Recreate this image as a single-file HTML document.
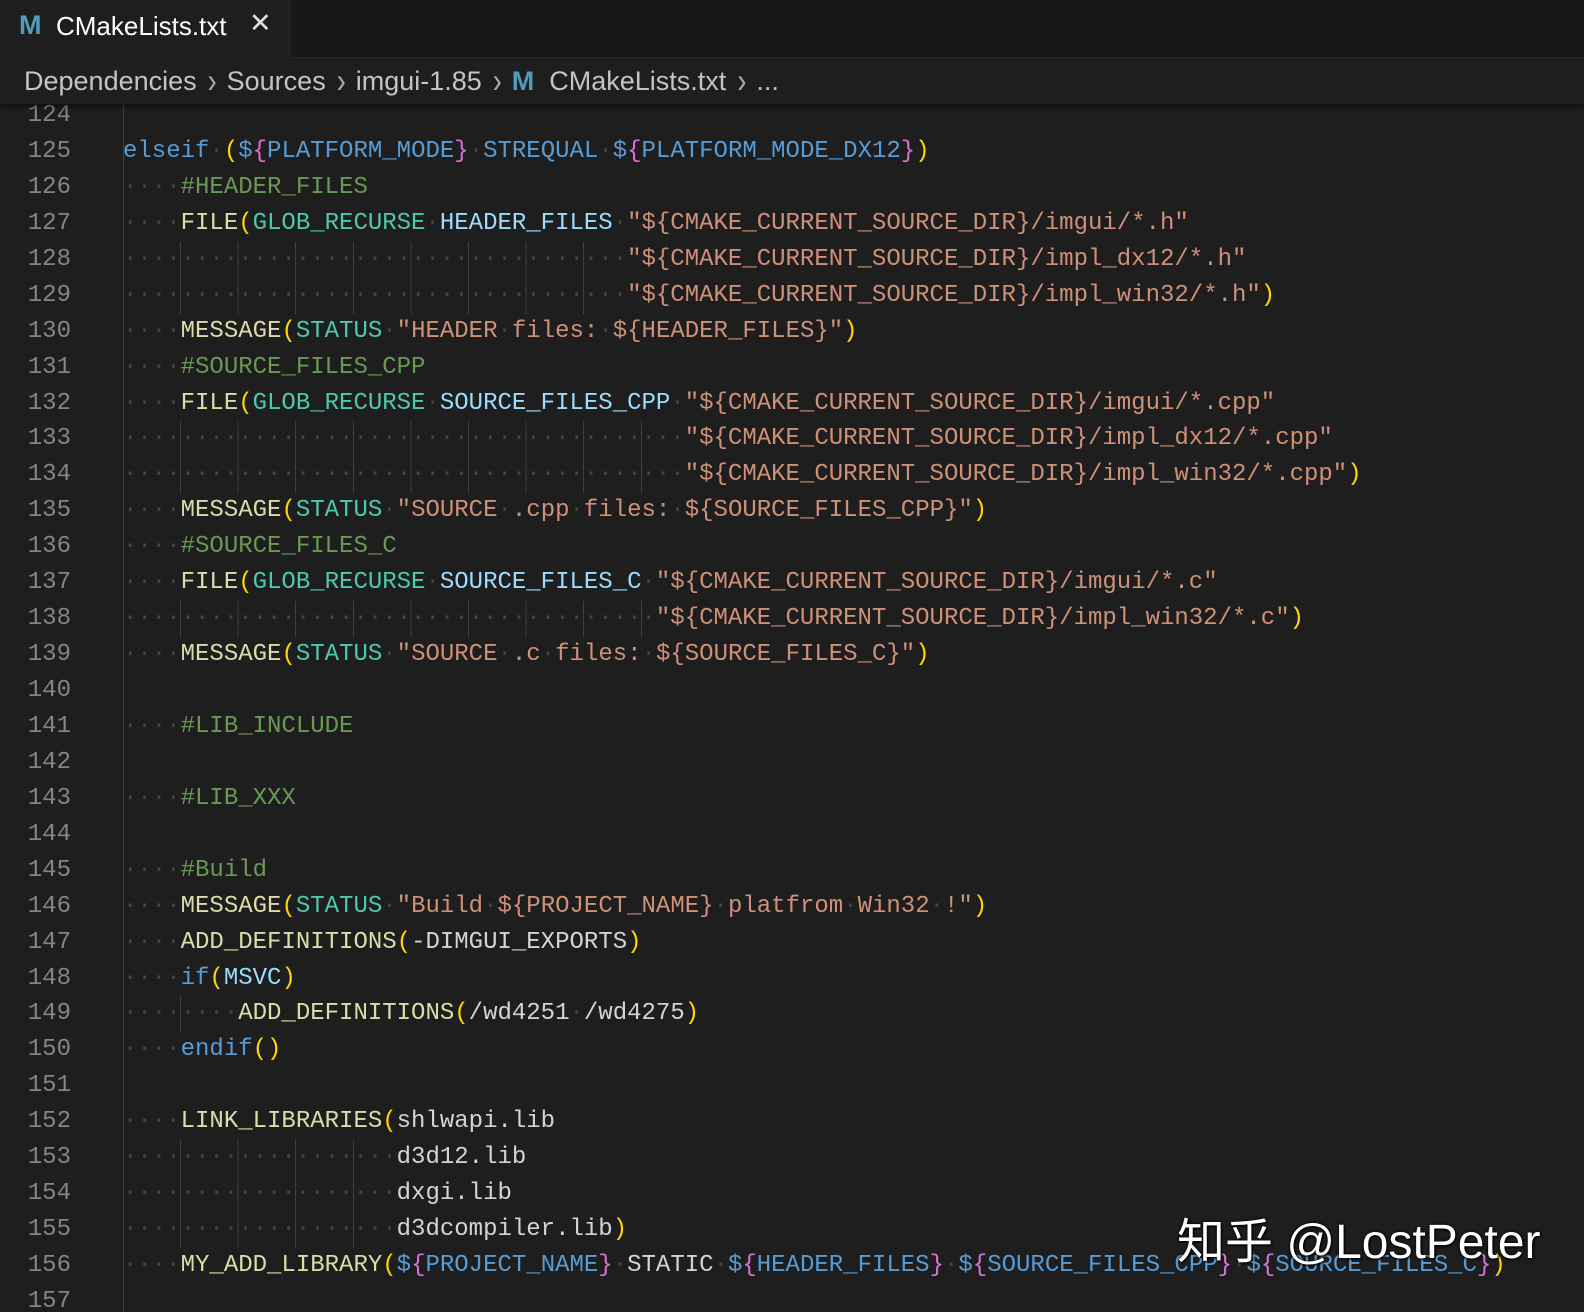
<!DOCTYPE html>
<html><head><meta charset="utf-8"><style>
html,body{margin:0;width:1584px;height:1312px;overflow:hidden}
body{background:#1e1e1e;position:relative;font-family:"Liberation Sans",sans-serif}
#tabs{position:absolute;left:0;top:0;width:1584px;height:58px;background:#181818;border-bottom:1px solid #2b2b2b;box-sizing:border-box}
#tab{position:absolute;left:0;top:0;width:290px;height:58px;background:#1e1e1e;border-right:1px solid #2b2b2b;box-sizing:border-box}
.m{color:#519aba;font-weight:bold;font-family:"Liberation Sans",sans-serif}
#crumb{position:absolute;left:0;top:58px;width:1584px;height:46px;background:#1e1e1e;z-index:2;box-shadow:0 3px 5px rgba(0,0,0,.5);color:#c4c4c4;font-size:27px;line-height:46px;white-space:pre;padding-left:24px;box-sizing:border-box}
.ch{color:#aaa;display:inline-block;margin:0 10px 0 11px;transform:scaleY(1.3)}
#code{position:absolute;left:0;top:98px;width:1584px;height:1220px;overflow:hidden;font-family:"Liberation Mono",monospace;font-size:24px;color:#d4d4d4}
.l{position:relative;height:35.95px;line-height:35.95px;padding-left:123px;white-space:pre}
.n{position:absolute;left:0;width:71px;text-align:right;color:#858585}
.gd{position:absolute;left:180px;top:0;height:100%;background:repeating-linear-gradient(to right,#404040 0 1px,transparent 1px 57.6px)}
#g0{position:absolute;left:123px;top:104px;width:1px;height:1230px;background:#404040}
i{font-style:normal;color:#444}
.k{color:#569cd6}.f{color:#dcdcaa}.p{color:#ffd700}.t{color:#4ec9b0}.v{color:#9cdcfe}.s{color:#ce9178}.c{color:#6a9955}.b{color:#da70d6}.d{color:#569cd6}
#wm{position:absolute;left:1177px;top:1202px;color:#fff;font-size:48px;font-family:"Liberation Sans","Noto Sans CJK SC",sans-serif;text-shadow:0 0 3px #000,1px 1px 2px #000;z-index:3;white-space:nowrap}
</style></head><body>
<div id="tabs"><div id="tab">
<span class="m" style="position:absolute;left:19px;top:10px;font-size:27px">M</span>
<span style="position:absolute;left:56px;top:11px;font-size:26px;color:#fff">CMakeLists.txt</span>
<span style="position:absolute;left:249px;top:8px;font-size:27px;color:#e0e0e0">✕</span>
</div></div>
<div id="crumb">Dependencies<span class="ch">›</span>Sources<span class="ch">›</span>imgui-1.85<span class="ch">›</span><span class="m">M</span>  CMakeLists.txt<span class="ch">›</span>...</div>
<div id="g0"></div>
<div id="code"><div class="l"><span class="n">124</span></div><div class="l"><span class="n">125</span><span class="k">elseif</span><i>·</i><span class="p">(</span><span class="d">$</span><span class="b">{</span><span class="d">PLATFORM_MODE</span><span class="b">}</span><i>·</i><span class="d">STREQUAL</span><i>·</i><span class="d">$</span><span class="b">{</span><span class="d">PLATFORM_MODE_DX12</span><span class="b">}</span><span class="p">)</span></div><div class="l"><span class="n">126</span><i>····</i><span class="c">#HEADER_FILES</span></div><div class="l"><span class="n">127</span><i>····</i><span class="f">FILE</span><span class="p">(</span><span class="t">GLOB_RECURSE</span><i>·</i><span class="v">HEADER_FILES</span><i>·</i><span class="s">"${CMAKE_CURRENT_SOURCE_DIR}/imgui/*.h"</span></div><div class="l"><span class="n">128</span><div class="gd" style="width:405px"></div><i>···································</i><span class="s">"${CMAKE_CURRENT_SOURCE_DIR}/impl_dx12/*.h"</span></div><div class="l"><span class="n">129</span><div class="gd" style="width:405px"></div><i>···································</i><span class="s">"${CMAKE_CURRENT_SOURCE_DIR}/impl_win32/*.h"</span><span class="p">)</span></div><div class="l"><span class="n">130</span><i>····</i><span class="f">MESSAGE</span><span class="p">(</span><span class="t">STATUS</span><i>·</i><span class="s">"HEADER<i>·</i>files:<i>·</i>${HEADER_FILES}"</span><span class="p">)</span></div><div class="l"><span class="n">131</span><i>····</i><span class="c">#SOURCE_FILES_CPP</span></div><div class="l"><span class="n">132</span><i>····</i><span class="f">FILE</span><span class="p">(</span><span class="t">GLOB_RECURSE</span><i>·</i><span class="v">SOURCE_FILES_CPP</span><i>·</i><span class="s">"${CMAKE_CURRENT_SOURCE_DIR}/imgui/*.cpp"</span></div><div class="l"><span class="n">133</span><div class="gd" style="width:462px"></div><i>·······································</i><span class="s">"${CMAKE_CURRENT_SOURCE_DIR}/impl_dx12/*.cpp"</span></div><div class="l"><span class="n">134</span><div class="gd" style="width:462px"></div><i>·······································</i><span class="s">"${CMAKE_CURRENT_SOURCE_DIR}/impl_win32/*.cpp"</span><span class="p">)</span></div><div class="l"><span class="n">135</span><i>····</i><span class="f">MESSAGE</span><span class="p">(</span><span class="t">STATUS</span><i>·</i><span class="s">"SOURCE<i>·</i>.cpp<i>·</i>files:<i>·</i>${SOURCE_FILES_CPP}"</span><span class="p">)</span></div><div class="l"><span class="n">136</span><i>····</i><span class="c">#SOURCE_FILES_C</span></div><div class="l"><span class="n">137</span><i>····</i><span class="f">FILE</span><span class="p">(</span><span class="t">GLOB_RECURSE</span><i>·</i><span class="v">SOURCE_FILES_C</span><i>·</i><span class="s">"${CMAKE_CURRENT_SOURCE_DIR}/imgui/*.c"</span></div><div class="l"><span class="n">138</span><div class="gd" style="width:462px"></div><i>·····································</i><span class="s">"${CMAKE_CURRENT_SOURCE_DIR}/impl_win32/*.c"</span><span class="p">)</span></div><div class="l"><span class="n">139</span><i>····</i><span class="f">MESSAGE</span><span class="p">(</span><span class="t">STATUS</span><i>·</i><span class="s">"SOURCE<i>·</i>.c<i>·</i>files:<i>·</i>${SOURCE_FILES_C}"</span><span class="p">)</span></div><div class="l"><span class="n">140</span></div><div class="l"><span class="n">141</span><i>····</i><span class="c">#LIB_INCLUDE</span></div><div class="l"><span class="n">142</span></div><div class="l"><span class="n">143</span><i>····</i><span class="c">#LIB_XXX</span></div><div class="l"><span class="n">144</span></div><div class="l"><span class="n">145</span><i>····</i><span class="c">#Build</span></div><div class="l"><span class="n">146</span><i>····</i><span class="f">MESSAGE</span><span class="p">(</span><span class="t">STATUS</span><i>·</i><span class="s">"Build<i>·</i>${PROJECT_NAME}<i>·</i>platfrom<i>·</i>Win32<i>·</i>!"</span><span class="p">)</span></div><div class="l"><span class="n">147</span><i>····</i><span class="f">ADD_DEFINITIONS</span><span class="p">(</span>-DIMGUI_EXPORTS<span class="p">)</span></div><div class="l"><span class="n">148</span><i>····</i><span class="k">if</span><span class="p">(</span><span class="v">MSVC</span><span class="p">)</span></div><div class="l"><span class="n">149</span><div class="gd" style="width:1px"></div><i>········</i><span class="f">ADD_DEFINITIONS</span><span class="p">(</span>/wd4251<i>·</i>/wd4275<span class="p">)</span></div><div class="l"><span class="n">150</span><i>····</i><span class="k">endif</span><span class="p">()</span></div><div class="l"><span class="n">151</span></div><div class="l"><span class="n">152</span><i>····</i><span class="f">LINK_LIBRARIES</span><span class="p">(</span>shlwapi.lib</div><div class="l"><span class="n">153</span><div class="gd" style="width:174px"></div><i>···················</i>d3d12.lib</div><div class="l"><span class="n">154</span><div class="gd" style="width:174px"></div><i>···················</i>dxgi.lib</div><div class="l"><span class="n">155</span><div class="gd" style="width:174px"></div><i>···················</i>d3dcompiler.lib<span class="p">)</span></div><div class="l"><span class="n">156</span><i>····</i><span class="f">MY_ADD_LIBRARY</span><span class="p">(</span><span class="d">$</span><span class="b">{</span><span class="d">PROJECT_NAME</span><span class="b">}</span><i>·</i>STATIC<i>·</i><span class="d">$</span><span class="b">{</span><span class="d">HEADER_FILES</span><span class="b">}</span><i>·</i><span class="d">$</span><span class="b">{</span><span class="d">SOURCE_FILES_CPP</span><span class="b">}</span><i>·</i><span class="d">$</span><span class="b">{</span><span class="d">SOURCE_FILES_C</span><span class="b">}</span><span class="p">)</span></div><div class="l"><span class="n">157</span></div></div>
<div id="wm">知乎 @LostPeter</div>
</body></html>
